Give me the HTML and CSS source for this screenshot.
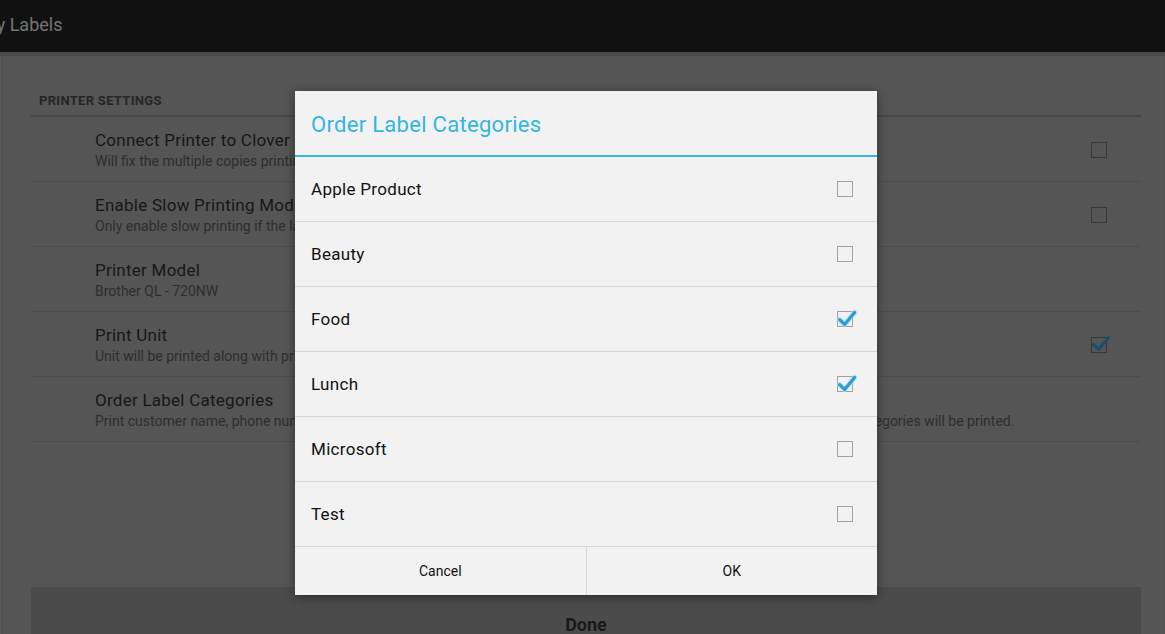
FILE: index.html
```html
<!DOCTYPE html>
<html lang="en">
<head>
<meta charset="utf-8">
<title>Category Labels</title>
<link rel="stylesheet" href="styles.css">
</head>
<body>
<div class="screen">
  <header class="actionbar"><span class="ab-title">Print Category Labels</span></header>
  <div class="strip"></div>
  <main class="content">
    <section class="settings">
      <h2 class="cat-header">PRINTER SETTINGS</h2>
      <div class="pref">
        <div class="pref-text">
          <div class="pref-title">Connect Printer to Clover</div>
          <div class="pref-sum">Will fix the multiple copies printing issue on some printers when connected to Clover.</div>
        </div>
        <span class="cb cb-bg"></span>
      </div>
      <div class="pref">
        <div class="pref-text">
          <div class="pref-title">Enable Slow Printing Mode</div>
          <div class="pref-sum">Only enable slow printing if the labels are not printed correctly.</div>
        </div>
        <span class="cb cb-bg"></span>
      </div>
      <div class="pref">
        <div class="pref-text">
          <div class="pref-title">Printer Model</div>
          <div class="pref-sum">Brother QL - 720NW</div>
        </div>
      </div>
      <div class="pref">
        <div class="pref-text">
          <div class="pref-title">Print Unit</div>
          <div class="pref-sum">Unit will be printed along with price on the label.</div>
        </div>
        <span class="cb cb-bg checked">
          <svg class="tick" viewBox="-2 -4 24 22" width="24" height="22"><path class="tick-line dark" d="M2.6 8.6 L7.6 13.4 L17.6 1.4"/></svg>
        </span>
      </div>
      <div class="pref">
        <div class="pref-text">
          <div class="pref-title">Order Label Categories</div>
          <div class="pref-sum">Print customer name, phone numbers and order numbers on the label for every order item. Only items in all of the selected categories will be printed.</div>
        </div>
      </div>
    </section>
    <button class="done" type="button">Done</button>
  </main>

  <div class="dialog">
    <div class="dlg-title">Order Label Categories</div>
    <ul class="dlg-list">
      <li class="dlg-item"><span class="dlg-label">Apple Product</span><span class="cb"></span></li>
      <li class="dlg-item"><span class="dlg-label">Beauty</span><span class="cb"></span></li>
      <li class="dlg-item"><span class="dlg-label">Food</span><span class="cb checked">
        <svg class="tick" viewBox="-2 -4 24 22" width="24" height="22"><path class="tick-glow" d="M2.6 8.6 L7.6 13.4 L17.6 1.4"/><path class="tick-line" d="M2.6 8.6 L7.6 13.4 L17.6 1.4"/></svg></span></li>
      <li class="dlg-item"><span class="dlg-label">Lunch</span><span class="cb checked">
        <svg class="tick" viewBox="-2 -4 24 22" width="24" height="22"><path class="tick-glow" d="M2.6 8.6 L7.6 13.4 L17.6 1.4"/><path class="tick-line" d="M2.6 8.6 L7.6 13.4 L17.6 1.4"/></svg></span></li>
      <li class="dlg-item"><span class="dlg-label">Microsoft</span><span class="cb"></span></li>
      <li class="dlg-item"><span class="dlg-label">Test</span><span class="cb"></span></li>
    </ul>
    <div class="dlg-buttons">
      <button class="dlg-btn" type="button">Cancel</button>
      <button class="dlg-btn dlg-btn-right" type="button">OK</button>
    </div>
  </div>
</div>
</body>
</html>
```

FILE: styles.css
```css
* { box-sizing: border-box; }
html, body { margin: 0; padding: 0; }
body {
  width: 1165px;
  height: 634px;
  overflow: hidden;
  background: #555555;
  font-family: Roboto, "Noto Sans", "Liberation Sans", sans-serif;
}
.screen {
  position: relative;
  width: 1165px;
  height: 634px;
  overflow: hidden;
  display: flex;
  flex-direction: column;
}
.actionbar {
  height: 52px;
  flex: 0 0 52px;
  background: #111111;
  display: flex;
  align-items: center;
  overflow: hidden;
  white-space: nowrap;
}
.ab-title {
  font-size: 18px;
  color: #767676;
  margin-left: -109px;
  padding-bottom: 4px;
}
.strip {
  height: 4px;
  flex: 0 0 4px;
  background: #4b4b4b;
}
.content {
  flex: 1;
  margin-left: 2px;
  border-left: 1px solid #4c4c4c;
  border-right: 1px solid #4f4f4f;
  padding: 36px 23px 0 28px;
  display: flex;
  flex-direction: column;
}
.settings { display: flex; flex-direction: column; }
.cat-header {
  margin: 0;
  font-size: 13px;
  font-weight: bold;
  letter-spacing: 0.3px;
  line-height: 17px;
  color: #262626;
  padding: 0 8px 6px;
  border-bottom: 2px solid #474747;
}
.pref {
  height: 65px;
  border-bottom: 1px solid #4c4c4c;
  display: flex;
  align-items: center;
  padding: 1px 34px 0 64px;
  white-space: nowrap;
}
.pref-text { flex: 1; min-width: 0; }
.pref-title {
  font-size: 17px;
  letter-spacing: 0.25px;
  line-height: 24px;
  color: #171717;
}
.pref-sum {
  margin-top: 0;
  font-size: 14px;
  line-height: 19px;
  color: #2e2e2e;
}
.done {
  margin-top: 145px;
  height: 74px;
  flex: 0 0 74px;
  border: 0;
  background: #4b4b4b;
  font-family: inherit;
  font-size: 18px;
  font-weight: bold;
  color: #191919;
  padding: 0;
}

/* checkboxes */
.cb {
  position: relative;
  display: block;
  width: 16px;
  height: 16px;
  flex: 0 0 16px;
  border: 1.5px solid #a2a2a2;
}
.cb-bg { border-color: #383838; }
.tick {
  position: absolute;
  left: -3.5px;
  top: -5.5px;
  overflow: visible;
}
.tick-line {
  fill: none;
  stroke: #2a9dd3;
  stroke-width: 3.2;
  stroke-linecap: round;
  stroke-linejoin: round;
}
.tick-line.dark { stroke: #17506c; }
.tick-glow {
  fill: none;
  stroke: #a7dcf3;
  stroke-width: 5.5;
  stroke-linecap: round;
  stroke-linejoin: round;
  opacity: 0.6;
}

/* dialog */
.dialog {
  position: absolute;
  left: 295px;
  top: 91px;
  width: 582px;
  background: #f2f2f2;
  box-shadow: 0 2px 10px rgba(0, 0, 0, 0.45);
}
.dlg-title {
  height: 66px;
  border-bottom: 2px solid #33b5e5;
  display: flex;
  align-items: center;
  padding: 3px 16px 0;
  font-size: 22px;
  letter-spacing: 0.3px;
  line-height: 26px;
  color: #33b5e5;
}
.dlg-list { list-style: none; margin: 0; padding: 0; }
.dlg-item {
  height: 65px;
  border-bottom: 1px solid #d6d6d6;
  display: flex;
  align-items: center;
  justify-content: space-between;
  padding: 0 24px 0 16px;
}
.dlg-label {
  font-size: 17px;
  letter-spacing: 0.3px;
  line-height: 20px;
  color: #111111;
}
.dlg-buttons {
  display: flex;
  height: 48px;
}
.dlg-btn {
  flex: 1;
  border: 0;
  background: transparent;
  font-family: inherit;
  font-size: 14px;
  color: #111111;
  padding: 0;
}
.dlg-btn-right { border-left: 1px solid #d9d9d9; }
```
